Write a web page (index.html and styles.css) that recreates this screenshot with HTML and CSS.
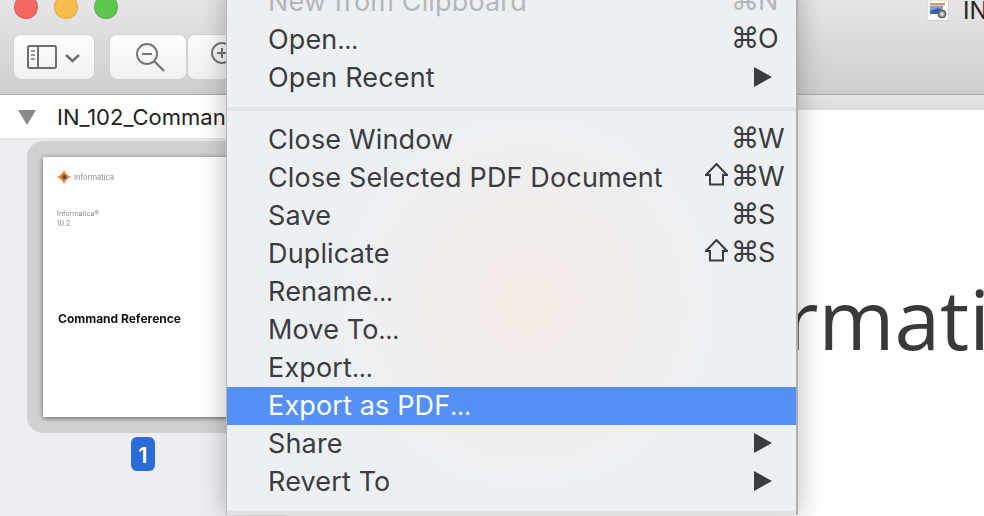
FILE: index.html
```html
<!DOCTYPE html>
<html lang="en">
<head>
<meta charset="utf-8">
<title>Preview</title>
<link rel="stylesheet" href="styles.css">
</head>
<body>
<div class="window">
  <header class="toolbar">
    <div class="title-row">
      <span class="light red"></span>
      <span class="light yellow"></span>
      <span class="light green"></span>
      <div class="doc-title">
        <svg class="doc-icon" width="24" height="22" viewBox="0 0 24 22">
          <path d="M1 0H22.500V20.500H1Z" fill="#fbfbfb" stroke="#cfcfcf"/>
          <rect x="4" y="3" width="15" height="2.500" fill="#c9a05c"/>
          <path d="M4 6H17V14H4Z" fill="#7f9fd6"/>
          <path d="M4 11L12 8L17 10V14H4Z" fill="#3f62a8"/>
          <circle cx="16" cy="14" r="4" fill="#8d8d8d" stroke="#555"/>
          <circle cx="16" cy="14" r="1.800" fill="#e8e8e8"/>
        </svg>
        <span class="doc-name">IN_102</span>
      </div>
    </div>
    <div class="tools">
      <button class="tool tool-side" type="button">
        <svg class="icon-side" width="56" height="26" viewBox="0 0 56 26" fill="none" stroke="#6f6f6f">
          <rect x="1" y="2" width="28" height="22" rx="1.500" stroke-width="2"/>
          <path d="M11 2V24" stroke-width="2"/>
          <path d="M4 7H8M4 11H8M4 15H8" stroke-width="2" stroke="#9a9a9a"/>
          <path d="M39 11L45.500 17L52 11" stroke-width="2.600"/>
        </svg>
      </button>
      <button class="tool tool-zoom" type="button">
        <svg class="icon-minus" width="32" height="32" viewBox="0 0 32 32" fill="none" stroke="#777" stroke-width="2">
          <circle cx="12" cy="12" r="10"/>
          <path d="M7 12H17"/>
          <path d="M19.500 19.500L29 29" stroke-width="2.400"/>
        </svg>
      </button>
      <button class="tool tool-zoom tool-joined" type="button">
        <svg width="32" height="32" viewBox="0 0 32 32" fill="none" stroke="#777" stroke-width="2">
          <circle cx="12" cy="12" r="10"/>
          <path d="M7 12H17M12 7V17"/>
          <path d="M19.500 19.500L29 29" stroke-width="2.400"/>
        </svg>
      </button>
    </div>
  </header>

  <div class="body">
    <aside class="sidebar">
      <div class="side-head">
        <span class="disclosure"></span>
        <span class="side-name">IN_102_CommandReference</span>
      </div>
      <div class="thumb-list">
        <div class="thumb-sel">
          <div class="thumb-page">
            <div class="thumb-logo">
              <svg width="14" height="14" viewBox="0 0 14 14">
                <path d="M7 0.500C8 3 11 6 13.500 7C11 8 8 11 7 13.500C6 11 3 8 0.500 7C3 6 6 3 7 0.500Z" fill="#ee7b30" stroke="#f3a76e" stroke-width="1"/>
                <circle cx="7.500" cy="7" r="2" fill="#2c4a86"/>
              </svg>
              <span>Informatica</span>
            </div>
            <p class="thumb-small">Informatica®<br>10.2</p>
            <p class="thumb-heading">Command Reference</p>
          </div>
        </div>
        <span class="page-badge">1</span>
      </div>
    </aside>
    <main class="content">
      <div class="content-strip"></div>
      <div class="page">
        <span class="page-word">Informatica</span>
      </div>
    </main>
  </div>

  <nav class="menu">
    <div class="item disabled"><span class="label">New from Clipboard</span><span class="keys"><i class="k-shift"></i><i class="k-cmd">⌘</i><i class="k-let">N</i></span></div>
    <div class="item"><span class="label">Open<span class="dots">…</span></span><span class="keys"><i class="k-shift"></i><i class="k-cmd">⌘</i><i class="k-let">O</i></span></div>
    <div class="item"><span class="label">Open Recent</span><span class="keys"><svg class="arrow" width="18" height="20" viewBox="0 0 18 20"><path d="M0 0L18 10L0 20Z"/></svg></span></div>
    <div class="sep"></div>
    <div class="item"><span class="label">Close Window</span><span class="keys"><i class="k-shift"></i><i class="k-cmd">⌘</i><i class="k-let">W</i></span></div>
    <div class="item"><span class="label">Close Selected PDF Document</span><span class="keys"><i class="k-shift"><svg width="23" height="23" viewBox="0 0 23 23"><path d="M11.500 1L22 12H18V21.500H5V12H1Z" fill="none" stroke="#3a3c3f" stroke-width="2"/></svg></i><i class="k-cmd">⌘</i><i class="k-let">W</i></span></div>
    <div class="item"><span class="label">Save</span><span class="keys"><i class="k-shift"></i><i class="k-cmd">⌘</i><i class="k-let">S</i></span></div>
    <div class="item"><span class="label">Duplicate</span><span class="keys"><i class="k-shift"><svg width="23" height="23" viewBox="0 0 23 23"><path d="M11.500 1L22 12H18V21.500H5V12H1Z" fill="none" stroke="#3a3c3f" stroke-width="2"/></svg></i><i class="k-cmd">⌘</i><i class="k-let">S</i></span></div>
    <div class="item"><span class="label">Rename<span class="dots">…</span></span></div>
    <div class="item"><span class="label">Move To<span class="dots">…</span></span></div>
    <div class="item"><span class="label">Export<span class="dots">…</span></span></div>
    <div class="item active"><span class="label">Export as PDF<span class="dots">…</span></span></div>
    <div class="item"><span class="label">Share</span><span class="keys"><svg class="arrow" width="18" height="20" viewBox="0 0 18 20"><path d="M0 0L18 10L0 20Z"/></svg></span></div>
    <div class="item"><span class="label">Revert To</span><span class="keys"><svg class="arrow" width="18" height="20" viewBox="0 0 18 20"><path d="M0 0L18 10L0 20Z"/></svg></span></div>
    <div class="sep sep-last"></div>
  </nav>
</div>
</body>
</html>
```
FILE: styles.css
```css
* { box-sizing: border-box; }
html, body { margin: 0; height: 100%; }
body { overflow: hidden; background: #fff; font-family: Inter, "Liberation Sans", sans-serif; }

.window { position: relative; width: 984px; height: 516px; overflow: hidden; display: flex; flex-direction: column; }

.toolbar { height: 95px; flex: none; border-bottom: 1px solid #a9a9a9; background: linear-gradient(#e7e5e7, #cfcecf); }
.title-row { display: flex; align-items: center; height: 24px; margin-top: -5px; padding-left: 14px; gap: 16px; }
.light { width: 24px; height: 24px; border-radius: 50%; border: 1px solid rgba(0, 0, 0, .1); }
.red { background: #f2675f; }
.yellow { background: #f9bd4b; }
.green { background: #5ec64f; }
.doc-title { margin-left: auto; display: flex; align-items: center; width: 58px; flex: none; overflow: hidden; gap: 13px; }
.doc-icon { flex: none; margin-top: 7px; }
.doc-name { font-size: 24px; line-height: 24px; color: #222; white-space: nowrap; margin-top: 7px; }

.tools { display: flex; margin-top: 16px; padding-left: 14px; }
.tool { height: 44px; padding: 0; display: flex; align-items: center; justify-content: center; background: linear-gradient(#fdfdfd, #f1f1f1); border: 0; border-radius: 7px; box-shadow: 0 0 0 1px #d2d1d2, 0 1px 1px #b9b8b9; }
.tool-side { width: 80px; margin-right: 16px; }
.tool-zoom { width: 76px; }
.tool-joined { margin-left: 2px; }
.icon-side { margin-left: 2px; }
.icon-minus { margin: 2px 0 0 6px; }

.body { flex: 1; display: flex; min-height: 0; }
.sidebar { width: 286px; flex: none; background: #eceef1; display: flex; flex-direction: column; }
.side-head { height: 45px; flex: none; display: flex; align-items: center; gap: 21px; padding: 1px 0 0 18px; background: #fff; border-bottom: 2px solid #e6e6e6; overflow: hidden; }
.disclosure { width: 0; height: 0; flex: none; border-left: 9px solid transparent; border-right: 9px solid transparent; border-top: 15px solid #8a8a8a; }
.side-name { font-size: 22px; color: #222; white-space: nowrap; }

.thumb-list { display: flex; flex-direction: column; align-items: flex-start; padding: 1px 0 0 27px; }
.thumb-sel { width: 232px; height: 292px; padding: 16px; background: #d0d1d3; border-radius: 16px; }
.thumb-page { height: 260px; padding: 13px 14px; background: #fff; box-shadow: 0 1px 5px rgba(0, 0, 0, .55); color: #8a8a8a; }
.thumb-logo { display: flex; align-items: center; gap: 3px; font-size: 7.500px; filter: blur(.5px); }
.thumb-small { margin: 25px 0 0; font-size: 7px; line-height: 10px; filter: blur(.5px); }
.thumb-heading { margin: 83px 0 0 1px; font-size: 12px; line-height: 14px; font-weight: 700; color: #111; white-space: nowrap; filter: blur(.4px); }
.page-badge { margin: 4px 0 0 104px; width: 24px; height: 34px; border-radius: 6px; background: #2b6bd8; color: #fff; font-size: 22px; font-weight: 600; line-height: 36px; text-align: center; }

.content { flex: 1; min-width: 0; display: flex; flex-direction: column; }
.content-strip { height: 15px; flex: none; background: linear-gradient(#e6e5e6, #dddcdd); }
.page { flex: 1; background: #fff; overflow: hidden; padding: 158px 0 0 349px; white-space: nowrap; }
.page-word { font-family: "Open Sans", sans-serif; font-size: 82px; line-height: 100px; color: #3a3a3a; white-space: nowrap; }

.menu { position: absolute; left: 226px; top: -17px; width: 572px; display: flex; flex-direction: column; color: #3a3c3f; background: radial-gradient(circle at 53% 60%, #f6ebe6 0, #f2edea 70px, #edf0f3 190px); border-left: 1px solid #b5b5b6; border-right: 2px solid #b0b0b1; box-shadow: 0 0 26px rgba(0, 0, 0, .28); }
.item { height: 38px; flex: none; display: flex; align-items: center; padding: 0 0 2px 42px; font-size: 27px; letter-spacing: .15px; white-space: nowrap; }
.label { flex: 1; margin-left: -1px; }
.dots { font-size: 24px; letter-spacing: -.5px; }
.keys { width: 91px; flex: none; display: flex; align-items: center; height: 36px; letter-spacing: 0; }
.keys i { font-style: normal; display: block; }
.k-shift { width: 26px; height: 23px; margin-top: -6px; flex: none; }
.k-shift svg { display: block; }
.k-cmd { width: 27px; font-family: "DejaVu Sans", sans-serif; font-size: 28.500px; line-height: 36px; flex: none; }
.k-let { font-size: 27px; line-height: 36px; }
.arrow { display: block; margin-left: 49px; fill: #3a3c3f; }
.disabled { color: #b4b6b9; }
.active { background: #5590f6; color: #fff; }
.sep { height: 4px; flex: none; margin: 10px 0; background: #e0e2e4; }
.sep-last { margin: 10px 0 0; }
```
